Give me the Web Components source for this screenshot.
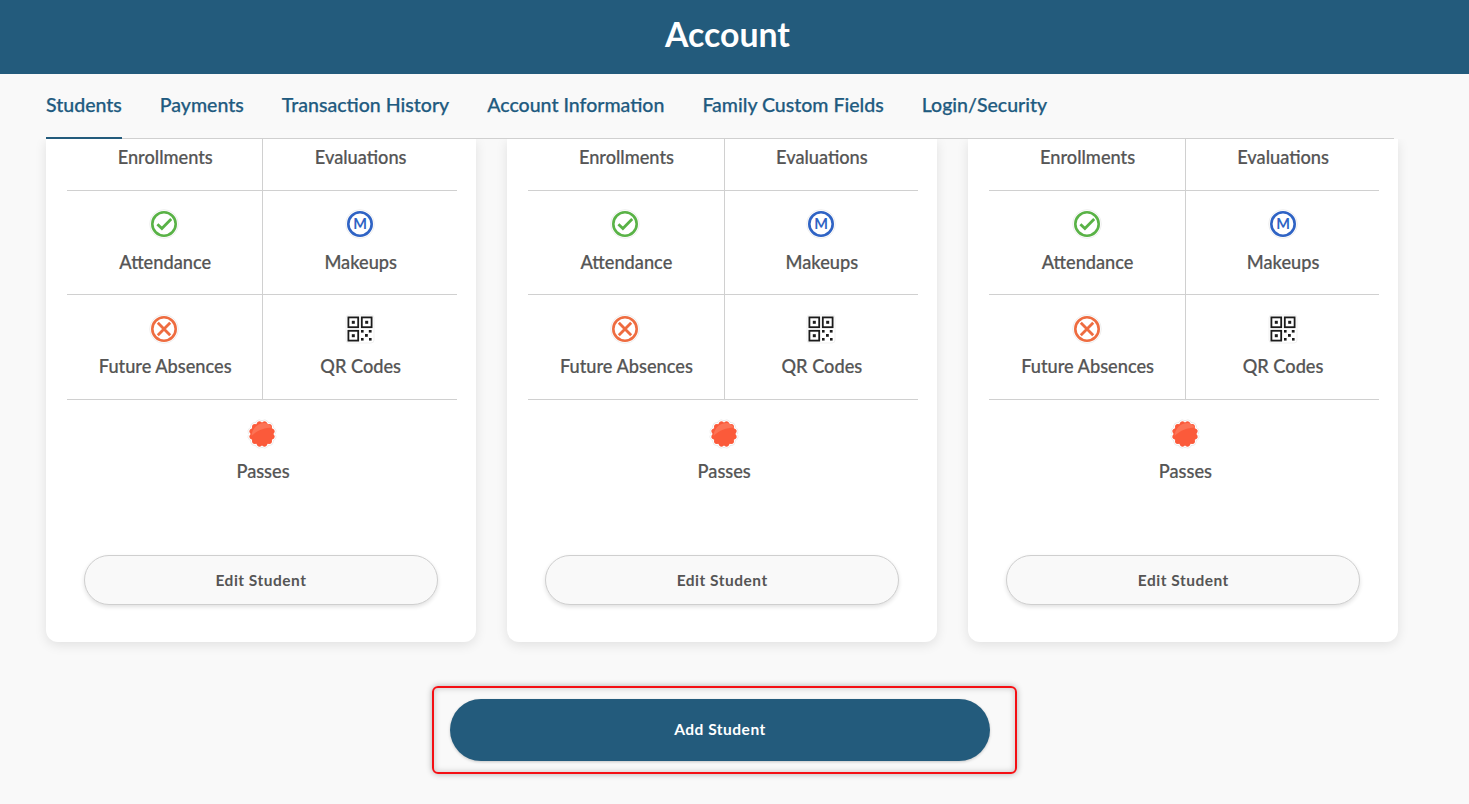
<!DOCTYPE html>
<html lang="en">
<head>
<meta charset="utf-8">
<title>Account</title>
<style>
    html, body { margin: 0; height: 100%; }
    body {
        background: #f9f9f9;
        color: #555;
        font-family: Lato, "Open Sans", sans-serif;
        overflow: hidden;
    }
</style>
</head>
<body>
<account-page></account-page>

<script>
// small shared icon set, each 30x30 with the pale ring behind it
const ring = '<circle cx="15" cy="15" r="14.3" fill="#fff" stroke="#efefef" stroke-width="1"/>';

function badgePath() {
    // scalloped edge for the passes badge
    const n = 12, cx = 15, cy = 15, inner = 11.4, ctrl = 15.2;
    let d = '';
    for (let i = 0; i < n; i++) {
        const a0 = (i / n) * Math.PI * 2;
        const a1 = ((i + 0.5) / n) * Math.PI * 2;
        const a2 = ((i + 1) / n) * Math.PI * 2;
        const x0 = cx + inner * Math.cos(a0), y0 = cy + inner * Math.sin(a0);
        const x1 = cx + ctrl * Math.cos(a1), y1 = cy + ctrl * Math.sin(a1);
        const x2 = cx + inner * Math.cos(a2), y2 = cy + inner * Math.sin(a2);
        if (i === 0) d += `M${x0.toFixed(2)} ${y0.toFixed(2)}`;
        d += `Q${x1.toFixed(2)} ${y1.toFixed(2)} ${x2.toFixed(2)} ${y2.toFixed(2)}`;
    }
    return d + 'Z';
}

const badge = badgePath();

const icons = {
    check: `${ring}<circle cx="15" cy="15" r="11.7" fill="none" stroke="#59b246" stroke-width="2.6"/>
        <path d="M8.400 15.200l4.500 4.400 9.300-9.500" fill="none" stroke="#59b246" stroke-width="2.800"/>`,
    makeup: `${ring}<circle cx="15" cy="15" r="11.7" fill="none" stroke="#2f63c4" stroke-width="2.6"/>
        <text x="15" y="20" text-anchor="middle" font-family="Lato, sans-serif" font-weight="700" font-size="14.500" fill="#2f63c4">M</text>`,
    cross: `${ring}<circle cx="15" cy="15" r="11.7" fill="none" stroke="#ee6c40" stroke-width="2.6"/>
        <path d="M8.800 8.800l12.400 12.400M21.200 8.800L8.800 21.200" fill="none" stroke="#ee6c40" stroke-width="2.800"/>`,
    qr: `<rect x="1" y="1" width="28" height="28" rx="3" fill="#fff" stroke="#f1f1f1"/>
        <g fill="none" stroke="#1b1b1b" stroke-width="1.800">
            <rect x="3.400" y="3.400" width="9.800" height="9.800"/>
            <rect x="16.800" y="3.400" width="9.800" height="9.800"/>
            <rect x="3.400" y="16.800" width="9.800" height="9.800"/>
        </g>
        <g fill="#1b1b1b">
            <rect x="6.800" y="6.800" width="3" height="3"/><rect x="20.200" y="6.800" width="3" height="3"/><rect x="6.800" y="20.200" width="3" height="3"/>
            <rect x="16" y="16" width="2.600" height="2.600"/><rect x="23.800" y="16" width="2.800" height="2.600"/>
            <rect x="20" y="20" width="2.800" height="2.800"/><rect x="16" y="24" width="2.600" height="2.600"/><rect x="24" y="24" width="2.600" height="2.600"/>
        </g>`,
    badge: `<path d="${badge}" fill="#fff" stroke="#e8e8e8" stroke-width="3.400"/>
        <path d="${badge}" fill="#fff" stroke="#fff" stroke-width="2"/>
        <path d="${badge}" fill="#fb5a3a"/>
        <path d="M4.500 17C5 9 11 3.800 18 4c3 .5 5.500 2 7 4.500C17 9 10.500 11 4.500 17z" fill="#fc7355"/>`
};

const headerTpl = document.createElement('template');
headerTpl.innerHTML = `
    <style>
        :host {
            display: flex;
            justify-content: center;
            align-items: center;
            height: 74px;
            padding: 0 14px 6px 0;
            box-sizing: border-box;
            background: #235b7c;
            color: #fff;
            font-size: 33.800px;
            font-weight: 700;
        }
    </style>
    <slot></slot>`;
class AppHeader extends HTMLElement {
    constructor() {
        super();
        this.attachShadow({ mode: 'open' }).append(headerTpl.content.cloneNode(true));
    }
}
customElements.define('app-header', AppHeader);

const tabsTpl = document.createElement('template');
tabsTpl.innerHTML = `
    <style>
        :host {
            display: flex;
            gap: 38px;
            height: 65px;
            box-sizing: border-box;
            margin-left: 46px;
            width: 1348px;
            border-bottom: 1px solid #d0d0d0;
        }
    </style>
    <slot></slot>`;
class TabBar extends HTMLElement {
    constructor() {
        super();
        this.attachShadow({ mode: 'open' }).append(tabsTpl.content.cloneNode(true));
    }
}
customElements.define('tab-bar', TabBar);

const tabTpl = document.createElement('template');
tabTpl.innerHTML = `
    <style>
        :host {
            display: block;
            height: 65px;
            box-sizing: border-box;
            padding-top: 19px;
            line-height: 24px;
            font-size: 19.550px;
            font-weight: 500;
            color: #1f5b80;
            white-space: nowrap;
            -webkit-text-stroke: .25px #1f5b80;
        }
        :host([active]) { border-bottom: 2px solid #235b7c; }
    </style>
    <slot></slot>`;
class TabItem extends HTMLElement {
    constructor() {
        super();
        this.attachShadow({ mode: 'open' }).append(tabTpl.content.cloneNode(true));
    }
}
customElements.define('tab-item', TabItem);

const iconTpl = document.createElement('template');
iconTpl.innerHTML = `
    <style>
        :host { display: block; width: 30px; height: 30px; margin: 0 auto; }
        svg { display: block; width: 30px; height: 30px; overflow: visible; }
    </style>
    <svg viewBox="0 0 30 30"></svg>`;
class StatusIcon extends HTMLElement {
    constructor() {
        super();
        this.attachShadow({ mode: 'open' }).append(iconTpl.content.cloneNode(true));
    }
    connectedCallback() {
        this.shadowRoot.querySelector('svg').innerHTML = icons[this.getAttribute('name')];
    }
}
customElements.define('status-icon', StatusIcon);

const pillTpl = document.createElement('template');
pillTpl.innerHTML = `
    <style>
        :host { display: block; }
        button {
            display: block;
            width: 100%;
            height: 100%;
            margin: 0;
            border-radius: 40px;
            font: 700 15.500px Lato, "Open Sans", sans-serif;
            letter-spacing: .5px;
            cursor: pointer;
        }
        :host([kind="plain"]) button {
            padding: 0;
            background: #f9f9f9;
            color: #555;
            border: 1px solid #cfcfcf;
            box-shadow: 0 2px 4px rgba(0,0,0,.12);
        }
        :host([kind="primary"]) button {
            padding: 0 0 2px;
            background: #235b7c;
            color: #fff;
            border: none;
            box-shadow: 0 1px 3px rgba(0,0,0,.2);
        }
    </style>
    <button><slot></slot></button>`;
class PillButton extends HTMLElement {
    constructor() {
        super();
        this.attachShadow({ mode: 'open' }).append(pillTpl.content.cloneNode(true));
    }
}
customElements.define('pill-button', PillButton);

const cardTpl = document.createElement('template');
cardTpl.innerHTML = `
    <style>
        :host {
            display: block;
            flex: none;
            width: 430px;
            height: 503px;
            box-sizing: border-box;
            padding: 0 19px 0 21px;
            background: #fff;
            border-radius: 0 0 12px 12px;
            box-shadow: 0 3px 12px rgba(0,0,0,.1);
            color: #555;
            font-size: 18.200px;
            font-weight: 500;
        }
        .grid {
            display: grid;
            grid-template-columns: 196.400px 193.600px;
            grid-template-rows: 52px 104px 105px 155px;
            text-align: center;
        }
        .cell {
            box-sizing: border-box;
            border-bottom: 1px solid #d0d0d0;
            padding-top: 18px;
        }
        .cell:nth-child(odd) { border-right: 1px solid #d0d0d0; padding-right: 1px; }
        .cell:nth-child(odd) .label { padding-left: 2px; }
        .first { padding-top: 6px; }
        .cell.lower { padding-top: 19px; }
        .cell.lower .label { margin-top: 10px; }
        .cell.last { grid-column: 1 / 3; border: none; padding: 19px 0 0 1px; }
        .cell.last .label { margin-top: 10px; padding-left: 1px; }
        .label {
            display: block;
            line-height: 24px;
            margin-top: 11px;
            padding-left: 1px;
            -webkit-text-stroke: .2px #555;
        }
        .first .label { margin-top: 0; }
        pill-button { width: 354px; height: 50px; margin: 0 0 0 17px; }
    </style>
    <div class="grid">
        <div class="cell first"><span class="label">Enrollments</span></div>
        <div class="cell first"><span class="label">Evaluations</span></div>
        <div class="cell"><status-icon name="check"></status-icon><span class="label">Attendance</span></div>
        <div class="cell"><status-icon name="makeup"></status-icon><span class="label">Makeups</span></div>
        <div class="cell lower"><status-icon name="cross"></status-icon><span class="label">Future Absences</span></div>
        <div class="cell lower"><status-icon name="qr"></status-icon><span class="label">QR Codes</span></div>
        <div class="cell last"><status-icon name="badge"></status-icon><span class="label">Passes</span></div>
    </div>
    <pill-button kind="plain">Edit Student</pill-button>`;
class StudentCard extends HTMLElement {
    constructor() {
        super();
        this.attachShadow({ mode: 'open' }).append(cardTpl.content.cloneNode(true));
    }
}
customElements.define('student-card', StudentCard);

const pageTpl = document.createElement('template');
pageTpl.innerHTML = `
    <style>
        :host { display: block; }
        .cards {
            display: flex;
            gap: 31.200px;
            padding-left: 46px;
            /* cards are scrolled under the tab bar, so nothing shows above it */
            clip-path: inset(0 0 -60px 0);
        }
        .actions {
            display: flex;
            margin: 44px 0 0 432px;
            width: 585px;
            height: 88px;
            box-sizing: border-box;
            padding: 11px 25px 11px 16px;
            border: 2px solid #f40f14;
            border-radius: 6px;
            box-shadow: 0 0 6px rgba(0,0,0,.3), inset 0 0 6px rgba(0,0,0,.22);
        }
        .actions pill-button { width: 540px; height: 62px; }
    </style>
    <app-header>Account</app-header>
    <tab-bar>
        <tab-item active>Students</tab-item>
        <tab-item>Payments</tab-item>
        <tab-item>Transaction History</tab-item>
        <tab-item>Account Information</tab-item>
        <tab-item>Family Custom Fields</tab-item>
        <tab-item>Login/Security</tab-item>
    </tab-bar>
    <div class="cards">
        <student-card></student-card>
        <student-card></student-card>
        <student-card></student-card>
    </div>
    <div class="actions">
        <pill-button kind="primary">Add Student</pill-button>
    </div>`;
class AccountPage extends HTMLElement {
    constructor() {
        super();
        this.attachShadow({ mode: 'open' }).append(pageTpl.content.cloneNode(true));
    }
}
customElements.define('account-page', AccountPage);
</script>
</body>
</html>
